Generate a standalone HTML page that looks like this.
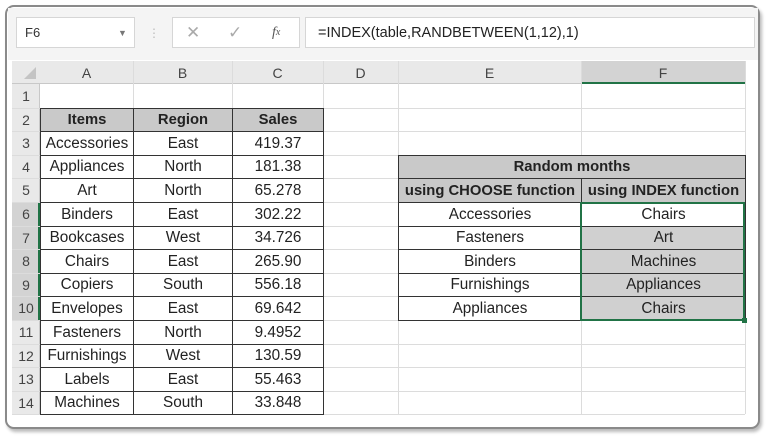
<!DOCTYPE html>
<html><head><style>
*{margin:0;padding:0;box-sizing:border-box}
body{width:767px;height:436px;background:#fff;position:relative;overflow:hidden;font-family:"Liberation Sans",sans-serif;color:#222}
.frame{position:absolute;left:5px;top:5px;width:755px;height:424px;border:2px solid #8a8a8a;border-radius:9px;box-shadow:2px 3px 3px #bbb;background:#fff;overflow:hidden}
.a{position:absolute}
.c{position:absolute;display:flex;align-items:center;justify-content:center;font-size:15.3px;white-space:nowrap}
.hl{position:absolute;height:1px;background:#dcdcdc}
.vl{position:absolute;width:1px;background:#dcdcdc}
</style></head><body>
<div class="frame"></div>
<div class="a" style="left:8px;top:8px;width:750px;height:52px;background:#f4f4f4"></div>
<div class="a" style="left:16px;top:17px;width:119px;height:31px;background:#fff;border:1px solid #d6d6d6"></div>
<div class="c" style="left:25px;top:17px;height:31px;font-size:13px;color:#333">F6</div>
<div class="c" style="left:118px;top:17px;height:31px;font-size:9px;color:#777">▼</div>
<div class="c" style="left:148px;top:17px;height:31px;font-size:12px;color:#bbb">⋮</div>
<div class="a" style="left:172px;top:17px;width:128px;height:31px;background:#fff;border:1px solid #d6d6d6"></div>
<div class="c" style="left:186px;top:17px;height:31px;font-size:17px;color:#aaa">✕</div>
<div class="c" style="left:228px;top:17px;height:31px;font-size:17px;color:#aaa">✓</div>
<div class="c" style="left:272px;top:17px;height:31px;font-size:14px;color:#555;font-family:'Liberation Serif',serif;font-style:italic">f<span style="font-size:10px">x</span></div>
<div class="a" style="left:305px;top:17px;width:450px;height:31px;background:#fff;border:1px solid #d6d6d6"></div>
<div class="c" style="left:318px;top:17px;height:31px;font-size:14.5px;color:#222">=INDEX(table,RANDBETWEEN(1,12),1)</div>
<div class="a" style="left:12px;top:61px;width:733px;height:23px;background:#e9e9e9;border-bottom:1px solid #c8c8c8"></div>
<div class="a" style="left:581px;top:61px;width:164px;height:23px;background:#d3d3d3;border-bottom:2px solid #217346"></div>
<div class="a" style="left:12px;top:84px;width:28px;height:330px;background:#e9e9e9;border-right:1px solid #c8c8c8"></div>
<div class="a" style="left:12px;top:202px;width:28px;height:118px;background:#d3d3d3;border-right:2px solid #217346"></div>
<div class="a" style="left:24px;top:67px;width:0;height:0;border-left:12px solid transparent;border-bottom:12px solid #c4c4c4"></div>
<div id="g"></div>
<script>
var cols=[40,133,232,323,398,581,745],names="ABCDEF";
var h='';
for(var i=0;i<6;i++){h+='<div class="c" style="left:'+cols[i]+'px;top:61px;width:'+(cols[i+1]-cols[i])+'px;height:23px;font-size:14px;color:#444">'+names[i]+'</div>';
 h+='<div class="vl" style="left:'+cols[i+1]+'px;top:61px;height:353px;background:#dcdcdc"></div>';}
var rt=function(r){return Math.round(84+(r-1)*23.6)};
for(var r=1;r<=14;r++){h+='<div class="c" style="left:12px;top:'+rt(r)+'px;width:28px;height:24px;font-size:14px;color:#444">'+r+'</div>';
 h+='<div class="hl" style="left:12px;top:'+rt(r+1)+'px;width:733px"></div>';}
var data=[["Items","Region","Sales"],["Accessories","East","419.37"],["Appliances","North","181.38"],["Art","North","65.278"],["Binders","East","302.22"],["Bookcases","West","34.726"],["Chairs","East","265.90"],["Copiers","South","556.18"],["Envelopes","East","69.642"],["Fasteners","North","9.4952"],["Furnishings","West","130.59"],["Labels","East","55.463"],["Machines","South","33.848"]];
function cell(x1,x2,r,txt,bold,bg){var t=rt(r),b=rt(r+1);h+='<div class="c" style="left:'+x1+'px;top:'+t+'px;width:'+(x2-x1+1)+'px;height:'+(b-t+1)+'px;border:1px solid #333;'+(bg?'background:'+bg+';':'background:#fff;')+(bold?'font-weight:bold;font-size:14.8px;':'')+'">'+txt+'</div>';}
for(var i=0;i<data.length;i++)for(var j=0;j<3;j++)cell(cols[j],cols[j+1],i+2,data[i][j],i==0,i==0?'#c9c9c9':'');
cell(398,745,4,"Random months",1,'#c9c9c9');
cell(398,581,5,"using CHOOSE function",1,'#c9c9c9');
cell(581,745,5,"using INDEX function",1,'#c9c9c9');
var e=["Accessories","Fasteners","Binders","Furnishings","Appliances"],f=["Chairs","Art","Machines","Appliances","Chairs"];
for(var i=0;i<5;i++){cell(398,581,6+i,e[i]);cell(581,745,6+i,f[i],0,i?'#d0d0d0':'');}
h+='<div class="a" style="left:580px;top:'+rt(6)+'px;width:165px;height:'+(rt(11)-rt(6)+1)+'px;border:2px solid #217346"></div>';
h+='<div class="a" style="left:742px;top:'+(rt(11)-2)+'px;width:5px;height:5px;background:#217346"></div>';
document.getElementById('g').innerHTML=h;
</script>
</body></html>
